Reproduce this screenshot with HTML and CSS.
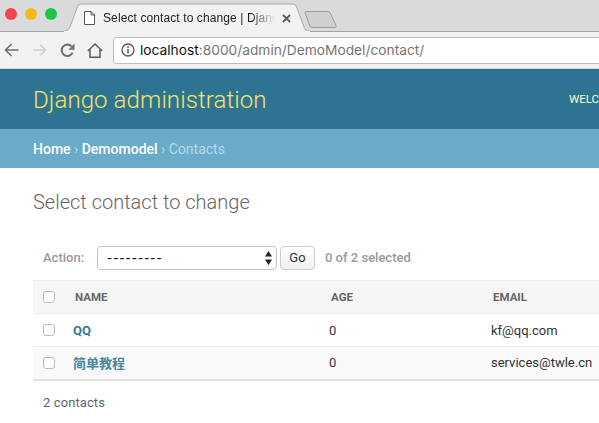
FILE: index.html
```html
<!DOCTYPE html>
<html lang="en">
<head>
    <meta charset="UTF-8">
    <title>Select contact to change | Django site admin</title>
    <link rel="stylesheet" href="styles.css">
</head>
<body>
    <div class="tabstrip">
        <div class="lights">
            <span class="light red"></span>
            <span class="light yellow"></span>
            <span class="light green"></span>
        </div>
        <div class="tab">
            <svg class="tab-shape" width="246" height="29" viewBox="0 0 246 29">
                <path d="M0.5 28 C4 28 5 26 6 24 L13 5 C14 2 15 1 18 1 L228 1 C231 1 232 2 233 5 L240 24 C241 26 242 28 245.5 28" fill="#f2f2f2" stroke="#a8a8a8"/>
                <path d="M0 28.5 H246" stroke="#f2f2f2"/>
            </svg>
            <svg class="page-icon" width="11" height="14" viewBox="0 0 11 14">
                <path d="M0.5 0.5 H7 L10.5 4 V13.5 H0.5 Z M7 0.5 V4 H10.5" fill="#fff" stroke="#555"/>
            </svg>
            <span class="tab-title">Select contact to change | Django site admin</span>
            <svg class="tab-close" width="9" height="9" viewBox="0 0 9 9">
                <path d="M1 1 L8 8 M8 1 L1 8" stroke="#5a5a5a" stroke-width="1.8"/>
            </svg>
        </div>
        <svg class="newtab" width="33" height="17" viewBox="0 0 33 17">
            <path d="M1 1.5 C1 1 1.5 0.5 2 0.5 L24 0.5 C25 0.5 25.5 1 26 1.5 L32 14.5 C32.3 15.5 32 16.5 31 16.5 L8 16.5 C7 16.5 6.5 16 6 15.5 Z" fill="#d0d0d2" stroke="#9c9c9e"/>
        </svg>
    </div>

    <div class="toolbar">
        <svg class="nav-icon back" width="15" height="14" viewBox="0 0 15 14">
            <path d="M14.5 7 H1.5 M7.5 1 L1.5 7 L7.5 13" fill="none" stroke="#6e6e6e" stroke-width="1.6"/>
        </svg>
        <svg class="nav-icon forward" width="14" height="14" viewBox="0 0 14 14">
            <path d="M0 7 H12.5 M7 1.5 L12.5 7 L7 12.5" fill="none" stroke="#cfcfcf" stroke-width="1.6"/>
        </svg>
        <svg class="nav-icon reload" width="15" height="15" viewBox="0 0 15 15">
            <path d="M12.6 9.6 A5.7 5.7 0 1 1 11.6 3.4" fill="none" stroke="#6e6e6e" stroke-width="2"/>
            <path d="M14.5 0.5 V6.8 H8.2 Z" fill="#6e6e6e"/>
        </svg>
        <svg class="nav-icon home" width="16" height="15" viewBox="0 0 16 15">
            <path d="M0.8 8 L8 1 L15.2 8 M3 6.5 V14.2 H13 V6.5" fill="none" stroke="#5f5f5f" stroke-width="1.5"/>
        </svg>
        <div class="omnibox">
            <svg class="info-icon" width="14" height="14" viewBox="0 0 14 14">
                <circle cx="7" cy="7" r="6" fill="none" stroke="#555" stroke-width="1.3"/>
                <path d="M7 6 V10.6 M7 3.4 V5" stroke="#555" stroke-width="1.5"/>
            </svg>
            <span class="url"><span class="host">localhost</span>:8000/admin/DemoModel/contact/</span>
        </div>
    </div>

    <div class="page">
        <div class="header">
            <div class="branding">Django administration</div>
            <div class="user-tools">WELCOME, ADMIN.</div>
        </div>
        <div class="breadcrumbs">
            <a href="#">Home</a> › <a href="#">Demomodel</a> › Contacts
        </div>
        <div class="content">
            <h1>Select contact to change</h1>
            <div class="actions">
                <label>Action:</label>
                <div class="select">
                    <span class="dashes">---------</span>
                    <svg width="7" height="14" viewBox="0 0 7 14">
                        <path d="M3.5 0 L7 5.5 H0 Z M3.5 14 L0 8.5 H7 Z" fill="#222"/>
                    </svg>
                </div>
                <button class="go">Go</button>
                <span class="counter">0 of 2 selected</span>
            </div>
            <table class="results">
                <thead>
                    <tr>
                        <th class="check"><span class="box"></span></th>
                        <th class="col-name">Name</th>
                        <th class="col-age">Age</th>
                        <th class="col-email">Email</th>
                    </tr>
                </thead>
                <tbody>
                    <tr>
                        <td class="check"><span class="box"></span></td>
                        <td class="col-name"><a href="#">QQ</a></td>
                        <td class="col-age">0</td>
                        <td class="col-email">kf@qq.com</td>
                    </tr>
                    <tr class="alt">
                        <td class="check"><span class="box"></span></td>
                        <td class="col-name"><a href="#" class="cjk">简单教程</a></td>
                        <td class="col-age">0</td>
                        <td class="col-email">services@twle.cn</td>
                    </tr>
                </tbody>
            </table>
            <p class="paginator">2 contacts</p>
        </div>
    </div>
</body>
</html>
```

FILE: styles.css
```css
html, body {
    margin: 0;
    height: 100%;
    overflow: hidden;
}

body {
    width: 599px;
    background: #fff;
    font-family: Roboto, "Noto Sans CJK SC", sans-serif;
    color: #333;
}

/* Browser chrome */
.tabstrip {
    height: 31px;
    display: flex;
    background: #d9dadc;
    border-bottom: 1px solid #a3a3a5;
}

.lights {
    display: flex;
    gap: 8px;
    padding: 8px 0 0 5px;
    width: 59px;
    box-sizing: border-box;
}

.light {
    width: 12px;
    height: 12px;
    border-radius: 50%;
}

.red { background: #f4454c; }
.yellow { background: #f6b71e; }
.green { background: #1ec647; }

.tab {
    position: relative;
    width: 246px;
    height: 31px;
    margin-left: 5px;
    display: flex;
    align-items: flex-start;
    font-family: "Liberation Sans", sans-serif;
    font-size: 12px;
    color: #222;
}

.tab-shape {
    position: absolute;
    left: 0;
    top: 3px;
}

.page-icon {
    position: relative;
    margin: 11px 0 0 20px;
    flex: none;
}

.tab-title {
    position: relative;
    width: 180px;
    margin: 11px 0 0 8px;
    white-space: nowrap;
    overflow: hidden;
    letter-spacing: 0.1px;
    -webkit-mask-image: linear-gradient(90deg, #000 148px, transparent 172px);
    mask-image: linear-gradient(90deg, #000 148px, transparent 172px);
}

.tab-close {
    position: relative;
    flex: none;
    margin: 14px 0 0 -1px;
}

.newtab {
    margin: 11px 0 0 -6px;
    position: relative;
}

.toolbar {
    height: 36px;
    display: flex;
    align-items: center;
    background: #f2f2f2;
    border-bottom: 1px solid #d6d6d6;
}

.nav-icon { flex: none; }
.back { margin-left: 4px; }
.forward { margin-left: 14px; }
.reload { margin-left: 13px; }
.home { margin-left: 12px; }

.omnibox {
    flex: 1;
    height: 25px;
    margin-left: 10px;
    margin-right: -6px;
    display: flex;
    align-items: center;
    gap: 5px;
    padding-left: 7px;
    background: #fff;
    border: 1px solid #bdbdbd;
    border-radius: 3px;
}

.url {
    font-family: Inter, "Liberation Sans", sans-serif;
    font-size: 13.75px;
    color: #757575;
    white-space: nowrap;
}

.host { color: #111; }

/* Admin page */
.page {
    width: 599px;
    overflow: hidden;
}

.header {
    height: 60px;
    display: flex;
    align-items: center;
    padding-left: 33px;
    background: #2d7492;
    color: #ffc;
}

.branding {
    flex: 1;
    padding-top: 2px;
    font-size: 24px;
    font-weight: 300;
    letter-spacing: 0.1px;
    color: #f7e264;
}

.user-tools {
    width: 30px;
    font-size: 11.5px;
    white-space: nowrap;
    overflow: hidden;
}

.breadcrumbs {
    height: 39px;
    line-height: 41px;
    padding-left: 33px;
    background: #69abc9;
    font-size: 14px;
    color: #b9d9e8;
}

.breadcrumbs a {
    color: #fff;
    font-weight: 500;
    text-decoration: none;
}

.content {
    padding: 0 0 0 33px;
}

h1 {
    margin: 22px 0 0;
    font-size: 20px;
    line-height: 24px;
    font-weight: 300;
    color: #666;
}

.actions {
    height: 25px;
    margin-top: 31px;
    padding-left: 10px;
    display: flex;
    align-items: center;
    font-size: 13px;
    font-weight: 500;
    color: #999;
}

.actions label {
    width: 54px;
}

.select {
    width: 180px;
    height: 24px;
    box-sizing: border-box;
    display: flex;
    align-items: center;
    justify-content: space-between;
    padding: 0 4px 0 9px;
    background: #fff;
    border: 1px solid #c4c4c4;
    border-radius: 4px;
    font-family: "Liberation Sans", sans-serif;
    color: #111;
}

.dashes {
    font-size: 15px;
    letter-spacing: 1.2px;
}

.go {
    width: 35px;
    height: 24px;
    margin-left: 3px;
    padding: 0;
    background: linear-gradient(#fff, #f0f0f0);
    border: 1px solid #ccc;
    border-radius: 4px;
    font-family: Roboto, sans-serif;
    font-size: 13px;
    font-weight: 400;
    color: #333;
}

.counter {
    margin-left: 10px;
    font-size: 13px;
    color: #999;
}

.results {
    width: 566px;
    margin-top: 10px;
    border-collapse: collapse;
    table-layout: fixed;
    font-size: 13px;
    border-bottom: 2px solid #e4e4e4;
}

.results th {
    height: 33px;
    padding: 0;
    box-sizing: border-box;
    text-align: left;
    font-size: 11.5px;
    font-weight: 700;
    text-transform: uppercase;
    color: #666;
    background: #f6f6f6;
    border-top: 1px solid #eee;
    border-bottom: 1px solid #eee;
}

.results td {
    height: 33px;
    padding: 0;
    box-sizing: border-box;
    border-bottom: 1px solid #eee;
}

.alt td { background: #f9f9f9; }

.results .check { width: 40px; padding-left: 10px; }
.results .col-name { width: 256px; }
.results .col-age { width: 162px; }
.results th.col-name { padding-left: 2px; }
.results th.col-age,
.results th.col-email { padding-left: 2px; }

.results td a {
    color: #367b99;
    font-weight: 700;
    text-decoration: none;
}

.results td a.cjk { color: #4a85a0; }

.box {
    display: block;
    box-sizing: border-box;
    width: 12px;
    height: 12px;
    background: #fff;
    border: 1px solid #bbb;
    border-radius: 3px;
}

.paginator {
    margin: 14px 0 0 10px;
    font-size: 13px;
    font-weight: 400;
    letter-spacing: 0.1px;
    line-height: 16px;
    color: #666;
}
```
